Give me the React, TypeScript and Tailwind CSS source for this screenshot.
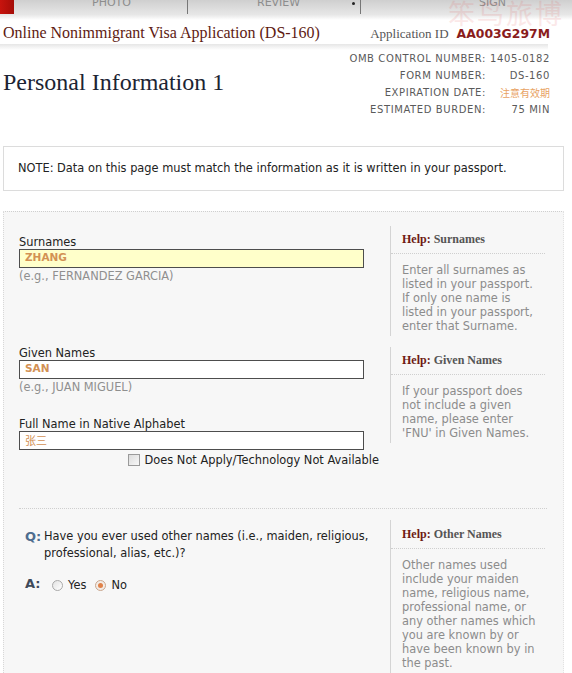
import React from "react";

const helpText = "text-[11.4px] leading-[14px] text-[#8c8c8c] font-['DejaVu_Sans',sans-serif] whitespace-nowrap";

function HelpTitle({ name }: { name: string }) {
  return (
    <div className="px-[11px] pb-[7px] border-b border-dotted border-[#cfcfcf] font-['Liberation_Serif',serif] font-bold text-[12px] leading-[14px]">
      <span className="text-[#6e1b14]">Help:</span> <span className="text-[#555]">{name}</span>
    </div>
  );
}

function Radio({ checked }: { checked?: boolean }) {
  return (
    <span
      className={
        "inline-flex items-center justify-center w-[11px] h-[11px] rounded-full border " +
        (checked ? "border-[#c9a68e] bg-[#f3ece6]" : "border-[#a9a9a9] bg-gradient-to-br from-[#e2e2e2] to-white")
      }
    >
      {checked && <span className="w-[5px] h-[5px] rounded-full bg-[#e0824a]" />}
    </span>
  );
}

export default function App() {
  return (
    <div className="relative w-[572px] h-[673px] overflow-hidden bg-white font-['DejaVu_Sans',sans-serif] text-[11.4px] text-[#222]">
      {/* top nav */}
      <div className="flex h-[14px]">
        <div className="w-[14px] bg-gradient-to-r from-[#c8140e] to-[#a50d08]" />
        <div className="flex flex-1 bg-gradient-to-b from-[#cfcfcf] to-[#e6e6e6] text-[11px] leading-[11px] text-[#8d8d8d] overflow-hidden">
          <div className="w-[174px] pl-[78px] -mt-[3px] border-r border-[#777]">PHOTO</div>
          <div className="relative w-[173px] pl-[69px] -mt-[3px] border-r border-[#777]">
            REVIEW
            <span className="absolute right-[5px] top-[5px] w-[3px] h-[3px] rounded-full bg-[#222]" />
          </div>
          <div className="flex-1 pl-[118px] -mt-[3px]">SIGN</div>
        </div>
      </div>
      <div className="h-[6px] bg-gradient-to-b from-[#e4e4e4] to-white" />

      {/* header */}
      <div className="flex items-baseline justify-between pl-[3px] pr-[22px] mt-[4px]">
        <div className="font-['Liberation_Serif',serif] text-[16px] leading-[18px] text-[#5e1a12]">
          Online Nonimmigrant Visa Application (DS-160)
        </div>
        <div className="flex items-baseline">
          <span className="font-['Liberation_Serif',serif] text-[13px] text-[#555]">Application ID</span>
          <span className="ml-[8px] font-bold text-[12.4px] text-[#8a1c1c]">AA003G297M</span>
        </div>
      </div>
      <div className="h-[6px] w-[548px] bg-gradient-to-b from-[#e6e6e6] to-white" />

      {/* title + OMB */}
      <div className="flex justify-between pl-[3px] pr-[22px]">
        <div className="mt-[18px] font-['Liberation_Serif',serif] text-[24px] leading-[28px] text-[#1c2433]">
          Personal Information 1
        </div>
        <div className="text-[10px] leading-[17px] tracking-[0.6px] text-[#5a5a5a]">
          <div className="flex justify-end">
            <span>OMB CONTROL NUMBER:</span>
            <span className="w-[64px] text-right">1405-0182</span>
          </div>
          <div className="flex justify-end">
            <span>FORM NUMBER:</span>
            <span className="w-[64px] text-right">DS-160</span>
          </div>
          <div className="flex justify-end">
            <span>EXPIRATION DATE:</span>
            <span className="w-[64px] text-right text-[#e8a263] font-['Noto_Sans_CJK_SC',sans-serif] tracking-normal">注意有效期</span>
          </div>
          <div className="flex justify-end">
            <span>ESTIMATED BURDEN:</span>
            <span className="w-[64px] text-right">75 MIN</span>
          </div>
        </div>
      </div>

      {/* note */}
      <div className="ml-[3px] mt-[28px] w-[561px] h-[45px] flex items-center pl-[14px] border border-[#dcdcdc] bg-white">
        NOTE: Data on this page must match the information as it is written in your passport.
      </div>

      {/* main panel */}
      <div className="ml-[3px] mt-[20px] w-[561px] h-[500px] bg-[#f7f7f7] border-t border-dotted border-t-[#cfcfcf] border-l border-l-[#d8d8d8] border-r border-r-[#e2e2e2]">
        {/* row 1 */}
        <div className="flex mt-[14px]">
          <div className="w-[386px] pl-[15px] pt-[10px]">
            <div className="leading-[13px]">Surnames</div>
            <div className="w-[345px] h-[19px] border border-[#4d4d4d] bg-[#ffffca] pl-[5px] flex items-center font-bold text-[10.5px] text-[#d39154]">
              ZHANG
            </div>
            <div className="mt-[1px] leading-[14px] text-[#8f8f8f]">(e.g., FERNANDEZ GARCIA)</div>
          </div>
          <div className="w-[155px] border-l border-[#d4d4d4] pt-[6px]">
            <HelpTitle name="Surnames" />
            <div className={"px-[11px] pt-[9px] pb-[3px] " + helpText}>
              Enter all surnames as
              <br />
              listed in your passport.
              <br />
              If only one name is
              <br />
              listed in your passport,
              <br />
              enter that Surname.
            </div>
          </div>
        </div>

        {/* row 2 */}
        <div className="flex items-start mt-[11px]">
          <div className="w-[386px] pl-[15px]">
            <div className="leading-[13px]">Given Names</div>
            <div className="w-[345px] h-[19px] border border-[#4d4d4d] bg-white pl-[5px] flex items-center font-bold text-[10.5px] text-[#d39154]">
              SAN
            </div>
            <div className="mt-[1px] leading-[14px] text-[#8f8f8f]">(e.g., JUAN MIGUEL)</div>
            <div className="mt-[24px] leading-[13px]">Full Name in Native Alphabet</div>
            <div className="w-[345px] h-[19px] border border-[#4d4d4d] bg-white pl-[5px] flex items-center text-[11px] text-[#d39154] font-['Noto_Sans_CJK_SC',sans-serif]">
              张三
            </div>
            <div className="mt-[4px] w-[360px] flex justify-end items-center h-[13px]">
              <span className="w-[12px] h-[12px] border border-[#9a9a9a] bg-gradient-to-br from-[#dcdcdc] to-[#f8f8f8]" />
              <span className="ml-[5px] leading-[13px]">Does Not Apply/Technology Not Available</span>
            </div>
          </div>
          <div className="w-[155px] border-l border-[#d4d4d4] pt-[6px]">
            <HelpTitle name="Given Names" />
            <div className={"px-[11px] pt-[9px] pb-[3px] " + helpText}>
              If your passport does
              <br />
              not include a given
              <br />
              name, please enter
              <br />
              'FNU' in Given Names.
            </div>
          </div>
        </div>

        {/* separator */}
        <div className="ml-[15px] mt-[41px] w-[528px] border-t border-dotted border-[#cfcfcf]" />

        {/* row 3 */}
        <div className="flex items-start mt-[11px]">
          <div className="w-[386px] pl-[21px] pt-[8px]">
            <div className="flex items-start">
              <span className="w-[19px] font-bold text-[13px] leading-[17px] text-[#4f6d8f]">Q:</span>
              <span className="leading-[17px]">
                Have you ever used other names (i.e., maiden, religious,
                <br />
                professional, alias, etc.)?
              </span>
            </div>
            <div className="flex items-center mt-[15px] h-[17px]">
              <span className="relative -top-[2px] w-[27px] font-bold text-[13px] leading-[17px] text-[#3f4a5a]">A:</span>
              <Radio />
              <span className="ml-[5px]">Yes</span>
              <span className="ml-[9px] flex items-center">
                <Radio checked />
              </span>
              <span className="ml-[5px]">No</span>
            </div>
          </div>
          <div className="w-[155px] border-l border-[#d4d4d4] pt-[7px] h-[160px]">
            <HelpTitle name="Other Names" />
            <div className={"px-[11px] pt-[9px] " + helpText}>
              Other names used
              <br />
              include your maiden
              <br />
              name, religious name,
              <br />
              professional name, or
              <br />
              any other names which
              <br />
              you are known by or
              <br />
              have been known by in
              <br />
              the past.
            </div>
          </div>
        </div>
      </div>

      {/* watermark */}
      <div className="absolute top-[-2px] right-[8px] text-[27px] leading-[30px] text-[#e04848] opacity-[0.12] font-['Noto_Sans_CJK_SC',sans-serif] tracking-[2px] pointer-events-none">
        笨鸟旅博
      </div>
    </div>
  );
}
